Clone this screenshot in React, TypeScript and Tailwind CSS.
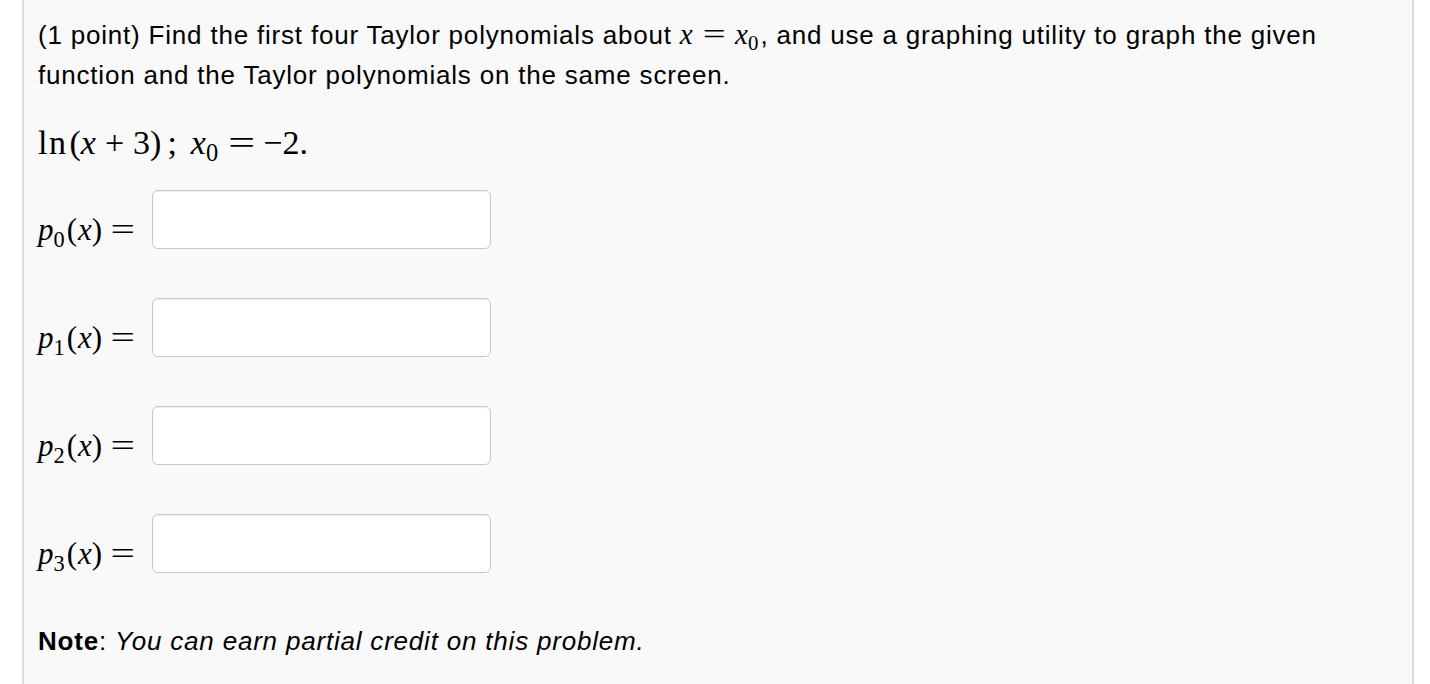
import React from "react"

const serif = { fontFamily: '"Liberation Serif", "Times New Roman", serif' }

function Sub({ children }: { children: React.ReactNode }) {
  return <sub className="relative text-[0.72em] align-baseline top-[0.3em] mr-[2px]">{children}</sub>
}

function PolyRow({ n }: { n: number }) {
  return (
    <div className="flex items-center h-[59px]">
      <div style={serif} className="w-[114px] text-[31px] leading-none text-black whitespace-nowrap pt-[20px]">
        <i>p</i>
        <Sub>{n}</Sub>
        <span className="tracking-[1px]">(</span>
        <i>x</i>
        <span>)</span>
        <span className="inline-block ml-[12px] scale-x-[1.4]">=</span>
      </div>
      <input
        type="text"
        className="h-[59px] w-[339px] rounded-[6px] border border-[#c8c8c8] bg-white shadow-[inset_0_1px_1px_rgba(0,0,0,0.06)] outline-none"
      />
    </div>
  )
}

export default function App() {
  return (
    <div className="min-h-[684px] bg-white">
      <div
        className="ml-[22px] w-[1392px] min-h-[684px] border-l-2 border-r-2 border-[#dcdcdc] bg-[#f9f9f9] pl-[14px] pr-[40px] pt-[14px] text-black"
        style={{ fontFamily: '"Liberation Sans", Arial, sans-serif' }}
      >
        <p className="text-[26px] leading-[40px] tracking-[0.8px]">
          (1 point) Find the first four Taylor polynomials about{" "}
          <span style={serif} className="text-[29px] tracking-normal">
            <i>x</i>
            <span className="inline-block mx-[13px] scale-x-[1.4]">=</span>
            <i>x</i>
            <Sub>0</Sub>
          </span>
          , and use a graphing utility to graph the given function and the Taylor polynomials on the same screen.
        </p>

        <p style={serif} className="mt-[28px] text-[34px] leading-[40px] whitespace-nowrap">
          <span className="tracking-[1.5px]">ln</span>
          <span className="ml-[2px]">(</span>
          <i>x</i>
          <span className="mx-[9px]">+</span>3)
          <span className="ml-[6px]">;</span>
          <span className="ml-[14px]">
            <i>x</i>
            <Sub>0</Sub>
          </span>
          <span className="inline-block mx-[12px] scale-x-[1.4]">=</span>−2.
        </p>

        <div className="mt-[27px] flex flex-col gap-[49px]">
          {[0, 1, 2, 3].map((n) => (
            <PolyRow key={n} n={n} />
          ))}
        </div>

        <p className="mt-[48px] text-[26px] leading-[40px] tracking-[0.8px]">
          <b>Note</b>: <i>You can earn partial credit on this problem.</i>
        </p>
      </div>
    </div>
  )
}
